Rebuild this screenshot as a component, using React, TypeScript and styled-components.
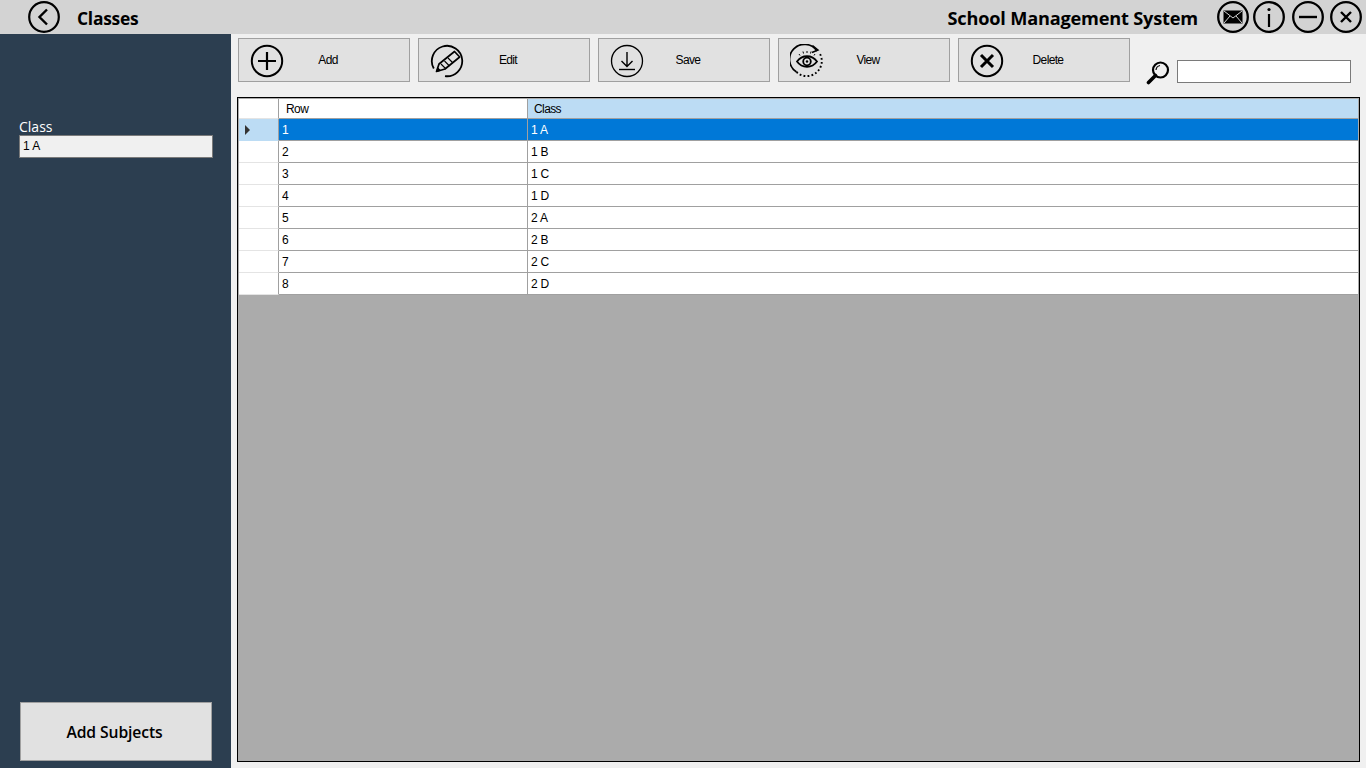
import React from "react";
import styled, { createGlobalStyle } from "styled-components";

const Global = createGlobalStyle`
  html, body { margin: 0; padding: 0; height: 100%; overflow: hidden; }
  #root { height: 100%; }
`;

const Page = styled.div`
  width: 1366px; height: 768px; display: flex; flex-direction: column;
  background: #f0f0f0; font-family: "Liberation Sans", Arial, sans-serif; color: #000;
`;
const TitleBar = styled.header`
  height: 34px; flex: none; background: #d3d3d3; display: flex; align-items: center;
  padding: 0 4px 0 28px; box-sizing: border-box;
`;
const Title = styled.h1`
  margin: 0; font: 700 17.4px/34px "Open Sans", "Noto Sans", sans-serif; letter-spacing: -0.25px; padding-top: 1px;
`;
const BackIcon = styled.svg`width: 32px; height: 32px; margin-right: 17px; flex: none;`;
const AppName = styled(Title)`margin-left: auto; margin-right: 19px; font-size: 18.2px; letter-spacing: -0.2px;`;
const WinIcons = styled.div`display: flex; align-items: center;`;
const WinIcon = styled.svg<{ $gap: number }>`width: 32px; height: 32px; margin-left: ${p => p.$gap}px; display: block;`;

const Body = styled.div`flex: 1; display: flex; min-height: 0;`;
const Sidebar = styled.aside`
  width: 231px; flex: none; background: #2c3e50; box-sizing: border-box;
  padding: 85px 18px 7px 19px; display: flex; flex-direction: column;
`;
const FieldLabel = styled.label`color: #fff; font: 400 14px/16px "Open Sans", "Noto Sans", sans-serif; height: 16px;`;
const ClassBox = styled.div`
  height: 23px; box-sizing: border-box; border: 1px solid #7a7a7a; background: #f0f0f0;
  font-size: 12px; line-height: 20px; padding-left: 3px;
`;
const SubjectsButton = styled.button`
  margin: auto 1px 0 1px; height: 59px; border: 1px solid #a0a0a0; background: #e1e1e1; color: #000;
  font: 600 15.7px "Open Sans", "Noto Sans", sans-serif; letter-spacing: -0.1px; padding: 0 3px 0 0;
`;
const Content = styled.main`
  flex: 1; min-width: 0; box-sizing: border-box; padding: 4px 5px 6px 6px; display: flex; flex-direction: column;
`;
const Toolbar = styled.div`height: 59px; flex: none; display: flex; gap: 8px; padding-left: 1px;`;
const ActionButton = styled.button`
  width: 172px; height: 44px; box-sizing: border-box; border: 1px solid #a0a0a0; background: #e1e1e1;
  padding: 0 0 0 8px; display: grid; grid-template-columns: 1fr; position: relative; align-items: center; justify-items: center;
  font: 400 12px "Liberation Sans", Arial, sans-serif; letter-spacing: -0.65px; color: #000;
`;
const ActionIcon = styled.svg`position: absolute; left: 11px; top: 5px; width: 34px; height: 34px;`;
const ActionLabel = styled.span``;
const Search = styled.div`display: flex; align-items: flex-start; margin-left: 16px; padding-top: 22px; gap: 6px;`;
const SearchIcon = styled.svg`width: 25px; height: 25px; flex: none; margin-left: -8px;`;
const SearchBox = styled.input`
  width: 174px; height: 23px; box-sizing: border-box; border: 1px solid #7a7a7a; background: #fff; padding: 0; outline: none;
`;
const Grid = styled.div`
  flex: 1; min-height: 0; border: 1px solid #000; background: #ababab; padding: 1px 1px 0 1px; width: 1123px; box-sizing: border-box;
  font-size: 12px;
`;
const GridRow = styled.div`
  display: grid; grid-template-columns: 40px 249px 1fr; height: 22px; box-sizing: border-box;
`;
const HeaderRow = styled(GridRow)`height: 20px;`;
const Cell = styled.div<{ $selected?: boolean }>`
  box-sizing: border-box; border-right: 1px solid #a0a0a0; border-bottom: 1px solid #a0a0a0;
  background: ${p => p.$selected ? "#0078d7" : "#fff"}; color: ${p => p.$selected ? "#fff" : "#000"};
  padding: 2px 0 0 3px; line-height: 19px; white-space: nowrap; letter-spacing: -0.2px; &:last-child { border-right: none; }
`;
const RowHead = styled.div<{ $current?: boolean }>`
  box-sizing: border-box; border-right: 1px solid #a0a0a0; border-bottom: 1px solid ${p => p.$current ? "#bcdcf4" : "#e4e4e4"};
  background: ${p => p.$current ? "#bcdcf4" : "#fff"}; position: relative;
`;
const Arrow = styled.span`
  position: absolute; left: 6px; top: 6px; width: 0; height: 0;
  border-left: 5px solid #333; border-top: 5px solid transparent; border-bottom: 5px solid transparent;
`;
const HeadCell = styled.div<{ $active?: boolean }>`
  box-sizing: border-box; border-right: 1px solid #a0a0a0; border-bottom: 1px solid #a0a0a0;
  background: ${p => p.$active ? "#bcdcf4" : "#fff"}; padding: 1px 0 0 ${p => p.$active ? 6 : 7}px; line-height: 18px; letter-spacing: -0.6px;
  &:last-child { border-right: none; }
`;

const Ring = () => <circle cx="17" cy="17" r="15.2" fill="none" stroke="#000" strokeWidth="2" />;
const Win = (p: { gap: number; children: React.ReactNode }) => (
  <WinIcon $gap={p.gap} viewBox="0 0 32 32" fill="none" stroke="#000">
    <circle cx="16" cy="16" r="14.8" strokeWidth="2.3" />
    {p.children}
  </WinIcon>
);

const icons: Record<string, React.ReactNode> = {
  Add: <><Ring /><path d="M17 8v18M8 17h18" stroke="#000" strokeWidth="2.2" fill="none" /></>,
  Edit: (
    <g fill="none" stroke="#000">
      <path d="M15 32.1A15.2 15.2 0 1 0 3.8 24.5" strokeWidth="1.8" />
      <path d="M6.5 27.5 9 20 24.5 7.5l5.2 5.5L15 25z" strokeWidth="1.7" strokeLinejoin="round" />
      <path d="M11 20l5 5M14.5 17l5 5M18 14l5 5" strokeWidth="1.1" />
      <path d="M6.5 27.5 7.8 23.8l2.8 2.6z" fill="#000" strokeWidth="1" />
    </g>
  ),
  Save: (
    <g fill="none" stroke="#000">
      <circle cx="17" cy="17" r="15.5" strokeWidth="1.3" />
      <path d="M17 8v14M11.5 17l5.5 5.5 5.5-5.5" strokeWidth="1.4" />
      <path d="M9 25.5h16" strokeWidth="1.4" />
    </g>
  ),
  View: (
    <g fill="none" stroke="#000">
      <path d="M27 7A15 15 0 1 0 6.5 28" strokeWidth="1.7" />
      <path d="M6.5 28A15 15 0 0 0 30 10" strokeWidth="1.9" strokeDasharray="1.8 2.2" />
      <path d="M22.5 1.5 28 6l-6 2.5" strokeWidth="1.5" />
      <path d="M7 17.5c5-7 15-7 20 0-5 7-15 7-20 0z" strokeWidth="1.8" />
      <circle cx="17" cy="17.5" r="3.8" strokeWidth="1.8" />
      <circle cx="17" cy="17.5" r="1.2" fill="#000" stroke="none" />
      <path d="M10 11.5l-1-1.5M13.5 9.5l-.5-2M17 9v-2M20.5 9.5l.5-2M24 11.5l1-1.5" strokeWidth="1" />
    </g>
  ),
  Delete: <><Ring /><path d="M11 11l12 12M23 11 11 23" stroke="#000" strokeWidth="3" fill="none" /></>,
};

const rows: [string, string][] = [["1","1 A"],["2","1 B"],["3","1 C"],["4","1 D"],["5","2 A"],["6","2 B"],["7","2 C"],["8","2 D"]];

export default function App() {
  return (
    <Page>
      <Global />
      <TitleBar>
        <BackIcon viewBox="0 0 32 32" fill="none" stroke="#000">
          <circle cx="16" cy="16" r="14.8" strokeWidth="2.2" />
          <path d="M19 8.5 11.5 16l7.5 7.5" strokeWidth="2.4" />
        </BackIcon>
        <Title>Classes</Title>
        <AppName as="div">School Management System</AppName>
        <WinIcons>
          <Win gap={0}>
            <rect x="6.5" y="9.5" width="19" height="13" fill="#000" stroke="none" />
            <path d="M7 10l9 7 9-7M7 22l6-7M25 22l-6-7" stroke="#d3d3d3" strokeWidth="1" />
          </Win>
          <Win gap={4}>
            <circle cx="16" cy="8.5" r="1.6" fill="#000" stroke="none" />
            <path d="M16 13v13" strokeWidth="2.2" />
          </Win>
          <Win gap={7}><path d="M7 16h18" strokeWidth="2.4" /></Win>
          <Win gap={6}><path d="M11 11l10 10M21 11 11 21" strokeWidth="2.4" /></Win>
        </WinIcons>
      </TitleBar>
      <Body>
        <Sidebar>
          <FieldLabel>Class</FieldLabel>
          <ClassBox>1 A</ClassBox>
          <SubjectsButton>Add Subjects</SubjectsButton>
        </Sidebar>
        <Content>
          <Toolbar>
            {Object.keys(icons).map(name => (
              <ActionButton key={name}>
                <ActionIcon viewBox="0 0 34 34">{icons[name]}</ActionIcon>
                <ActionLabel>{name}</ActionLabel>
              </ActionButton>
            ))}
            <Search>
              <SearchIcon viewBox="0 0 25 25" fill="none" stroke="#000">
                <circle cx="14.5" cy="10" r="7.5" strokeWidth="2.2" />
                <path d="M9.5 15.5 2.5 22.5" strokeWidth="3.6" strokeLinecap="round" />
                <path d="M10 10a5 5 0 0 1 4-4.5" strokeWidth="1.2" />
              </SearchIcon>
              <SearchBox />
            </Search>
          </Toolbar>
          <Grid>
            <HeaderRow>
              <RowHead />
              <HeadCell>Row</HeadCell>
              <HeadCell $active>Class</HeadCell>
            </HeaderRow>
            {rows.map(([n, c], i) => (
              <GridRow key={n}>
                <RowHead $current={i === 0}>{i === 0 && <Arrow />}</RowHead>
                <Cell $selected={i === 0}>{n}</Cell>
                <Cell $selected={i === 0}>{c}</Cell>
              </GridRow>
            ))}
          </Grid>
        </Content>
      </Body>
    </Page>
  );
}
